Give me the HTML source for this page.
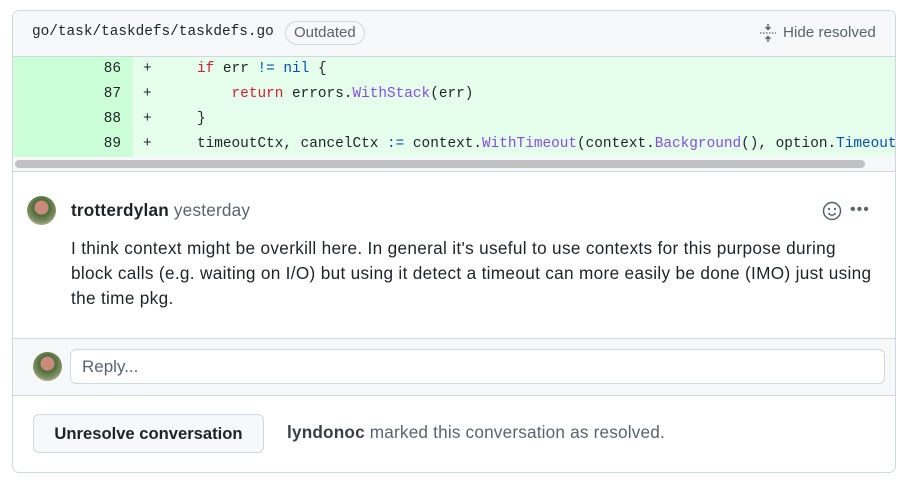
<!DOCTYPE html>
<html><head><style>
body{margin:0;background:#fff;width:908px;height:483px;overflow:hidden;font-family:"Liberation Sans",sans-serif;color:#1f2328}
.box{position:absolute;left:12px;top:10px;width:882px;height:461px;border:1px solid #d0d7de;border-radius:7px;overflow:hidden}
.hdr{position:absolute;left:0;top:0;width:882px;height:45px;background:#f6f8fa;border-bottom:1px solid #d0d7de}
.mono{font-family:"Liberation Mono",monospace;font-size:14.4px}
.row{position:absolute;left:0;width:882px;height:25px;background:#e6ffec;white-space:pre;line-height:25px}
.ln{position:absolute;left:0;width:120px;height:25px;background:#ccffd8;text-align:right;box-sizing:border-box;padding-right:12px}
.pl{position:absolute;left:130px}
.cd{position:absolute;left:184px}
.k{color:#cf222e}.b{color:#0550ae}.f{color:#8250df}
.av{position:absolute;border-radius:50%;background:radial-gradient(circle at 50% 40%,#c98a7a 0 30%,#4a6b3a 32%,#7a8a5a 60%,#ddd 100%)}
</style></head><body>
<div class="box">
<div class="hdr">
<span class="mono" style="position:absolute;left:19px;top:13px">go/task/taskdefs/taskdefs.go</span>
<span style="position:absolute;left:272px;top:10px;height:22px;line-height:22px;padding:0 8px;border:1px solid #d0d7de;border-radius:12px;font-size:15px;color:#59636e">Outdated</span>
<svg style="position:absolute;left:746px;top:12px" width="18" height="20" viewBox="0 0 18 20"><path d="M9 1v5M6.5 4L9 6.5 11.5 4M9 19v-5M6.5 16L9 13.5 11.5 16" stroke="#59636e" stroke-width="1.5" fill="none"/><path d="M1 10h16" stroke="#59636e" stroke-width="1.3" stroke-dasharray="1.5 1.5"/></svg>
<span style="position:absolute;left:770px;top:13px;font-size:15.2px;color:#59636e">Hide resolved</span>
</div>
<div class="row mono" style="top:46px"><span class="ln">86</span><span class="pl">+</span><span class="cd"><span class="k">if</span> err <span class="b">!=</span> <span class="b">nil</span> {</span></div>
<div class="row mono" style="top:71px"><span class="ln">87</span><span class="pl">+</span><span class="cd">    <span class="k">return</span> errors.<span class="f">WithStack</span>(err)</span></div>
<div class="row mono" style="top:96px"><span class="ln">88</span><span class="pl">+</span><span class="cd">}</span></div>
<div class="row mono" style="top:121px"><span class="ln">89</span><span class="pl">+</span><span class="cd">timeoutCtx, cancelCtx <span class="b">:=</span> context.<span class="f">WithTimeout</span>(context.<span class="f">Background</span>(), option.<span class="b">Timeout</span></span></div>
<div style="position:absolute;left:0;top:146px;width:882px;height:14px;background:#f6f8fa;border-bottom:1px solid #d0d7de"></div>
<div style="position:absolute;left:2px;top:149px;width:850px;height:8px;border-radius:4px;background:#c1c1c1"></div>
<div class="av" style="left:14px;top:185px;width:29px;height:29px"></div>
<div style="position:absolute;left:58px;top:189px;font-size:17.2px;letter-spacing:0.2px"><b>trotterdylan</b> <span style="color:#59636e">yesterday</span></div>
<svg style="position:absolute;left:809px;top:190px" width="20" height="20" viewBox="0 0 20 20"><circle cx="10" cy="10" r="8.5" fill="none" stroke="#59636e" stroke-width="1.5"/><circle cx="7" cy="8" r="1.1" fill="#59636e"/><circle cx="13" cy="8" r="1.1" fill="#59636e"/><path d="M6.5 12a4 4 0 0 0 7 0" fill="none" stroke="#59636e" stroke-width="1.5"/></svg>
<div style="position:absolute;left:837px;top:190px;font-size:16px;color:#59636e;letter-spacing:1px">•••</div>
<div style="position:absolute;left:58px;top:225px;width:830px;font-size:17.2px;line-height:25px;letter-spacing:0.32px;white-space:nowrap">I think context might be overkill here. In general it's useful to use contexts for this purpose during<br>block calls (e.g. waiting on I/O) but using it detect a timeout can more easily be done (IMO) just using<br>the time pkg.</div>
<div style="position:absolute;left:0;top:327px;width:882px;height:56px;background:#f6f8fa;border-top:1px solid #d0d7de;border-bottom:1px solid #d0d7de"></div>
<div class="av" style="left:20px;top:341px;width:29px;height:29px"></div>
<div style="position:absolute;left:57px;top:338px;width:815px;height:35px;background:#fff;border:1px solid #d0d7de;border-radius:6px;box-sizing:border-box;padding-left:11px;line-height:33px;font-size:17px;color:#59636e">Reply...</div>
<div style="position:absolute;left:20px;top:403px;width:229px;height:37px;background:#f6f8fa;border:1px solid #d0d7de;border-radius:6px;text-align:center;line-height:37px;font-size:16.6px;font-weight:bold">Unresolve conversation</div>
<div style="position:absolute;left:274px;top:411px;font-size:17.2px;color:#59636e;letter-spacing:0.18px"><b style="color:#3a3f45">lyndonoc</b> marked this conversation as resolved.</div>
</div>
</body></html>
